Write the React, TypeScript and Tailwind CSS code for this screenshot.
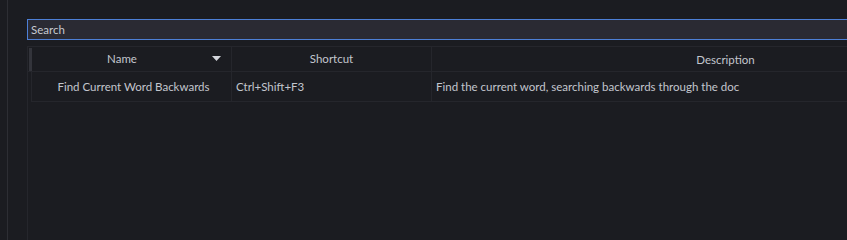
import React from 'react';

const font = { fontFamily: 'Lato, "Noto Sans", sans-serif' };

function SortArrow() {
  return (
    <svg width="9" height="5" viewBox="0 0 9 5" className="absolute right-[10px] top-[9px]">
      <polygon points="0,0 9,0 4.5,5" fill="#d4d6dc" />
    </svg>
  );
}

export default function App() {
  return (
    <div className="w-[847px] h-[240px] bg-[#1b1c21] overflow-hidden flex text-[11.5px] text-[#c3c6ce]" style={font}>
      {/* left gutter */}
      <div className="w-[7px] shrink-0" />
      <div className="w-px shrink-0 bg-[#2d2e34]" />
      <div className="w-[19px] shrink-0" />

      <div className="flex-1 flex flex-col pt-[19px] min-w-0">
        {/* search box */}
        <div className="h-[21px] w-[840px] shrink-0 border border-[#4d7fd6] bg-[#2a2a33] flex items-center pl-[3px] text-[#c7c9d0]">
          Search
        </div>

        {/* table */}
        <div className="mt-[6px] flex-1 w-[1000px] border-l border-t border-[#25262c] flex flex-col">
          {/* header */}
          <div className="flex h-[25px] border-b border-[#25262c]">
            <div className="w-[3px] pt-[1px] pl-[1px] shrink-0">
              <div className="w-[3px] h-[23px] bg-[#33343b]" />
            </div>
            <div className="relative w-[201px] shrink-0 border-r border-[#25262c] flex items-center justify-center pr-[18px]">
              Name
              <SortArrow />
            </div>
            <div className="w-[200px] shrink-0 border-r border-[#25262c] flex items-center justify-center">
              Shortcut
            </div>
            <div className="w-[587px] shrink-0 flex items-center justify-center pt-px">
              Description
            </div>
          </div>

          {/* row */}
          <div className="flex h-[30px] border-b border-[#25262c] ml-[3px]">
            <div className="w-[201px] shrink-0 border-l border-r border-[#25262c] flex items-center justify-center pl-[4px]">
              Find Current Word Backwards
            </div>
            <div className="w-[200px] shrink-0 border-r border-[#25262c] flex items-center pl-[4px]">
              Ctrl+Shift+F3
            </div>
            <div className="w-[587px] shrink-0 flex items-center pl-[4px]">
              Find the current word, searching backwards through the doc
            </div>
          </div>
        </div>
      </div>
    </div>
  );
}
